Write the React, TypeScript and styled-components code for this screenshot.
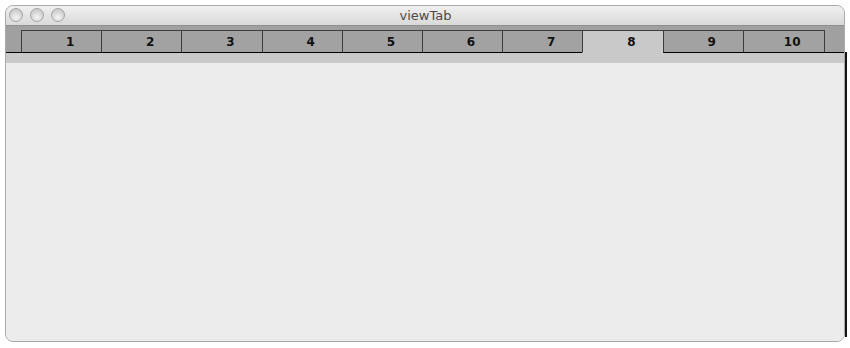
import { useState } from 'react'
import styled, { createGlobalStyle } from 'styled-components'

const TABS = ['1', '2', '3', '4', '5', '6', '7', '8', '9', '10']

const GlobalStyle = createGlobalStyle`
	html, body {
		margin: 0;
		padding: 0;
		background: #ffffff;
		font-family: "DejaVu Sans", "Liberation Sans", sans-serif;
	}
`

const Page = styled.div`
	display: flex;
	align-items: flex-start;
	padding: 5px 0 0 5px;
`

const Window = styled.div`
	width: 840px;
	height: 337px;
	box-sizing: border-box;
	border: 1px solid #a9a9a9;
	border-radius: 8px;
	overflow: hidden;
	display: flex;
	flex-direction: column;
	background: #ececec;
`

const TitleBar = styled.div`
	position: relative;
	height: 19px;
	flex: none;
	display: flex;
	align-items: center;
	justify-content: center;
	background: linear-gradient(#f0f0f0, #d9d9d9);
	border-bottom: 1px solid #8e8e8e;
`

const Lights = styled.div`
	position: absolute;
	left: 3px;
	top: 2px;
	display: flex;
	gap: 7px;
`

const Light = styled.span`
	width: 14px;
	height: 14px;
	box-sizing: border-box;
	border-radius: 50%;
	border: 1px solid #a4a4a4;
	background: radial-gradient(circle at 50% 70%, #f4f4f4, #cdcdcd 70%);
`

const Title = styled.div`
	font-size: 13px;
	color: #4a4a4a;
	margin-left: 1px;
`

const TabStrip = styled.div`
	flex: none;
	display: flex;
	padding: 4px 0 0 15px;
	background: #a0a0a0;
	border-bottom: 1px solid #000;
`

const Tab = styled.button<{ $active: boolean; $last: boolean }>`
	all: unset;
	box-sizing: border-box;
	width: ${p => (p.$last ? 82 : 80.2)}px;
	height: 23px;
	margin-bottom: -1px;
	display: flex;
	align-items: center;
	justify-content: center;
	padding: 1px 0 0 17px;
	border-top: 1px solid #3c3c3c;
	border-left: 1px solid #3c3c3c;
	border-right: ${p => (p.$last ? '1px solid #3c3c3c' : 'none')};
	border-bottom: 1px solid ${p => (p.$active ? '#c9c9c9' : '#000')};
	background: ${p => (p.$active ? '#c9c9c9' : '#a2a2a2')};
	font-size: 12px;
	font-weight: bold;
	color: #111;
	cursor: default;
`

const Band = styled.div`
	flex: none;
	height: 10px;
	background: #c9c9c9;
`

const Content = styled.div`
	flex: 1;
	background: #ececec;
`

const EdgeStrip = styled.div`
	width: 2px;
	height: 285px;
	margin-top: 47px;
	background: #141414;
`

export default function App() {
	const [active, setActive] = useState(7)

	return (
		<>
			<GlobalStyle />
			<Page>
				<Window>
					<TitleBar>
						<Lights>
							<Light />
							<Light />
							<Light />
						</Lights>
						<Title>viewTab</Title>
					</TitleBar>
					<TabStrip>
						{TABS.map((t, i) => (
							<Tab
								key={t}
								$active={i === active}
								$last={i === TABS.length - 1}
								onClick={() => setActive(i)}
							>
								{t}
							</Tab>
						))}
					</TabStrip>
					<Band />
					<Content />
				</Window>
				<EdgeStrip />
			</Page>
		</>
	)
}
